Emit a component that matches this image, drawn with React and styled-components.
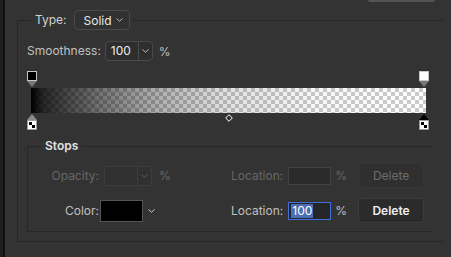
import React from 'react'
import styled, { createGlobalStyle } from 'styled-components'

const GlobalStyle = createGlobalStyle`
    html, body {
        margin:0;
        padding:0;
        background:#333333;
        overflow:hidden;
    }
    body {
        font-family:Inter, "Noto Sans", sans-serif;
        font-size:12px;
        color:#c4c4c4;
    }
`

function Chevron({ color = '#b8b8b8' }) {
    return (
        <svg width="7" height="4" viewBox="0 0 7 4">
            <polyline points="0.5,0.5 3.5,3.2 6.5,0.5" fill="none" stroke={color} strokeWidth="1" />
        </svg>
    )
}

function OpacityStop({ fill }) {
    return (
        <svg width="10" height="17" viewBox="0 0 10 17">
            <rect x="0.5" y="0.5" width="9" height="9" fill={fill} stroke="#c6c6c6" />
            <polygon points="0,10 10,10 5,16" fill="#7a7a7a" />
        </svg>
    )
}

function ColorStop({ selected }) {
    return (
        <svg width="10" height="17" viewBox="0 0 10 17">
            <polygon points="5,1 10,7 0,7" fill={selected ? '#000' : '#8a8a8a'} />
            <rect x="0.5" y="7.5" width="9" height="9" fill="#fff" stroke="#9a9a9a" />
            <rect x="2" y="9" width="3" height="3" fill="#000" />
            <rect x="5" y="12" width="3" height="3" fill="#000" />
        </svg>
    )
}

function Midpoint() {
    return (
        <svg width="8" height="8" viewBox="0 0 8 8">
            <polygon points="4,0.7 7.3,4 4,7.3 0.7,4" fill="none" stroke="#fff" strokeWidth="1" />
        </svg>
    )
}

function App() {
    return (
        <Page>
            <GlobalStyle />
            <Strip />
            <Main>
                <ButtonStub />
                <Group>
                    <TypeLegend>
                        <Label bright>Type:</Label>
                        <Select>
                            <span>Solid</span>
                            <Chevron />
                        </Select>
                    </TypeLegend>

                    <Row>
                        <Label>Smoothness:</Label>
                        <Combo gap="4px">
                            <ComboValue>100</ComboValue>
                            <ComboArrow><Chevron /></ComboArrow>
                        </Combo>
                        <Unit gap="6px">%</Unit>
                    </Row>

                    <GradientEditor>
                        <Bar />
                        <Marker left={0} top={0}><OpacityStop fill="#000" /></Marker>
                        <Marker left={392} top={0}><OpacityStop fill="#fff" /></Marker>
                        <Marker left={0} top={42}><ColorStop /></Marker>
                        <Marker left={392} top={42}><ColorStop selected /></Marker>
                        <Marker left={198} top={43}><Midpoint /></Marker>
                    </GradientEditor>

                    <StopsGroup>
                        <StopsLegend>Stops</StopsLegend>
                        <StopRow>
                            <LeftHalf>
                                <RowLabel disabled>Opacity:</RowLabel>
                                <Combo gap="5px" disabled>
                                    <ComboValue />
                                    <ComboArrow disabled><Chevron color="#5a5a5a" /></ComboArrow>
                                </Combo>
                                <Unit gap="7px" disabled>%</Unit>
                            </LeftHalf>
                            <Label disabled>Location:</Label>
                            <Field disabled />
                            <Unit gap="4px" disabled>%</Unit>
                            <Button disabled>Delete</Button>
                        </StopRow>
                        <StopRow>
                            <LeftHalf>
                                <RowLabel>Color:</RowLabel>
                                <Swatch />
                                <SwatchArrow><Chevron color="#c8c8c8" /></SwatchArrow>
                            </LeftHalf>
                            <Label>Location:</Label>
                            <Field focused><Selected>100</Selected></Field>
                            <Unit gap="4px">%</Unit>
                            <Button>Delete</Button>
                        </StopRow>
                    </StopsGroup>
                </Group>
            </Main>
        </Page>
    )
}

export default App

const Page = styled.div`
    display:flex;
    width:451px;
    height:257px;
`

const Strip = styled.div`
    width:3px;
    background:#1d1d1d;
    border-right:2px solid #111111;
`

const Main = styled.div`
    flex:1;
    display:flex;
    flex-direction:column;
`

const ButtonStub = styled.div`
    align-self:flex-end;
    width:67px;
    height:2px;
    margin-right:16px;
    background:#535353;
    border-radius:0 0 5px 5px;
`

const Group = styled.fieldset`
    margin:8px 0 0 12px;
    width:426px;
    box-sizing:border-box;
    padding:11px 0 9px 9px;
    border:1px solid #272727;
    border-right:none;
    min-width:0;
`

const TypeLegend = styled.legend`
    display:flex;
    align-items:center;
    gap:7px;
    margin-left:5px;
    padding:0 3px;
    height:20px;
`

const Label = styled.span`
    color:${props => props.disabled ? '#676767' : props.bright ? '#d2d2d2' : '#c0c0c0'};
    white-space:nowrap;
    line-height:14px;
`

const Select = styled.div`
    display:flex;
    align-items:center;
    justify-content:space-between;
    box-sizing:border-box;
    width:56px;
    height:20px;
    padding:0 6px 0 9px;
    border:1px solid #4a4a4a;
    border-radius:4px;
    background:#313131;
    color:#e8e8e8;
`

const Row = styled.div`
    display:flex;
    align-items:center;
    height:20px;
`

const Combo = styled.div`
    display:flex;
    box-sizing:border-box;
    width:48px;
    height:20px;
    margin-left:${props => props.gap};
    border:1px solid ${props => props.disabled ? '#3e3e3e' : '#4a4a4a'};
    border-radius:4px;
    background:${props => props.disabled ? '#303030' : '#2e2e2e'};
`

const ComboValue = styled.div`
    flex:1;
    padding-left:5px;
    line-height:18px;
    color:#ececec;
`

const ComboArrow = styled.div`
    width:13px;
    display:flex;
    align-items:center;
    justify-content:center;
    border-left:1px solid ${props => props.disabled ? '#3e3e3e' : '#4a4a4a'};
`

const Unit = styled.span`
    margin-left:${props => props.gap};
    color:${props => props.disabled ? '#676767' : '#c0c0c0'};
`

const GradientEditor = styled.div`
    position:relative;
    width:403px;
    margin-top:10px;
    padding:17px 4px;
    box-sizing:border-box;
`

const Bar = styled.div`
    height:25px;
    background-color:#fff;
    background-image:
        linear-gradient(to right,
            rgba(0,0,0,1) 0%,
            rgba(0,0,0,0.85) 3%,
            rgba(0,0,0,0.56) 17%,
            rgba(0,0,0,0.34) 30%,
            rgba(0,0,0,0.12) 49%,
            rgba(0,0,0,0.03) 72%,
            rgba(0,0,0,0) 100%),
        conic-gradient(#cbcbcb 25%, #ffffff 0 50%, #cbcbcb 0 75%, #ffffff 0);
    background-size:100% 100%, 8px 8px;
`

const Marker = styled.div`
    position:absolute;
    left:${props => props.left}px;
    top:${props => props.top}px;
    display:flex;
    line-height:0;
`

const StopsGroup = styled.fieldset`
    margin:9px 0 0 0;
    width:406px;
    box-sizing:border-box;
    padding:10px 0 8px 0;
    border:1px solid #272727;
    border-right:none;
    min-width:0;
`

const StopsLegend = styled.legend`
    margin-left:13px;
    padding:0 4px;
    line-height:14px;
    font-weight:600;
    color:#e2e2e2;
`

const StopRow = styled.div`
    display:flex;
    align-items:center;
    height:25px;
    & + & {
        margin-top:10px;
    }
`

const LeftHalf = styled.div`
    display:flex;
    align-items:center;
    width:203px;
`

const RowLabel = styled(Label)`
    width:71px;
    text-align:right;
`

const Field = styled.div`
    box-sizing:border-box;
    width:43px;
    height:18px;
    margin-left:5px;
    padding:1px 0 0 2px;
    border:1px solid ${props => props.focused ? '#3f6fd8' : '#424242'};
    background:${props => props.disabled ? '#2b2b2b' : '#262626'};
    line-height:14px;
`

const Selected = styled.span`
    display:inline-block;
    padding:0 1px;
    background:#4a6db3;
    color:#ffffff;
`

const Swatch = styled.div`
    box-sizing:border-box;
    width:43px;
    height:22px;
    margin-left:1px;
    background:#000;
    border:1px solid #555555;
`

const SwatchArrow = styled.div`
    display:flex;
    margin-left:5px;
`

const Button = styled.div`
    box-sizing:border-box;
    width:66px;
    height:25px;
    margin-left:11px;
    display:flex;
    align-items:center;
    justify-content:center;
    border:1px solid ${props => props.disabled ? '#363636' : '#3c3c3c'};
    border-radius:4px;
    background:${props => props.disabled ? '#2f2f2f' : '#2b2b2b'};
    color:${props => props.disabled ? '#6c6c6c' : '#eeeeee'};
    font-weight:${props => props.disabled ? 400 : 600};
`
